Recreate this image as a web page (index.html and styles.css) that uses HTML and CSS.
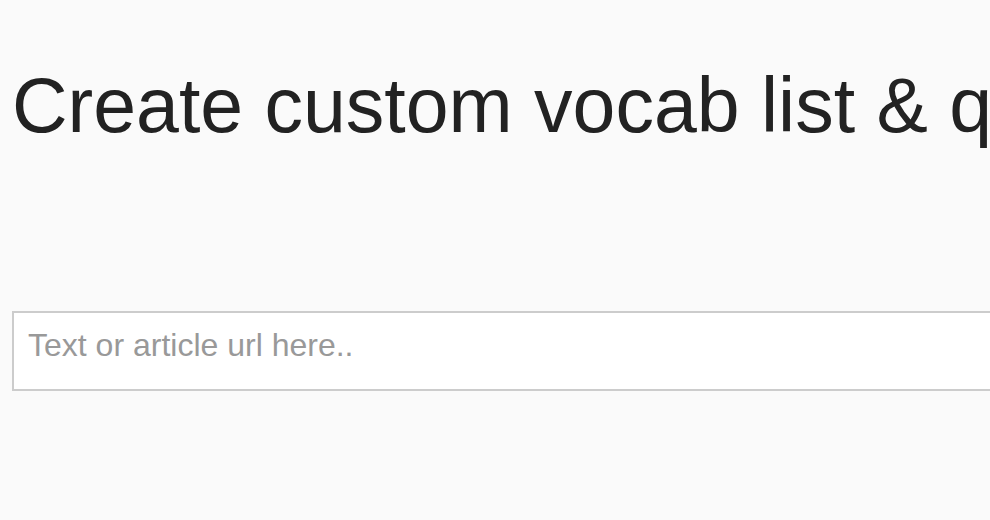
FILE: index.html
```html
<!DOCTYPE html>
<html lang="en">
<head>
<meta charset="utf-8">
<title>Create custom vocab list</title>
<link rel="stylesheet" href="styles.css">
</head>
<body>
<main class="page">
  <h1 class="title">Create custom vocab list &amp; quiz</h1>
  <form class="entry">
    <textarea class="entry-field" rows="1" placeholder="Text or article url here.."></textarea>
  </form>
</main>
</body>
</html>
```
FILE: styles.css
```css
html, body {
  margin: 0;
  padding: 0;
  background: #fafafa;
  overflow: hidden;
}
body {
  font-family: "Liberation Sans", Arial, Helvetica, sans-serif;
  color: #222222;
}
.page {
  padding: 67px 0 0 12px;
  width: 1400px;
}
.title {
  margin: 0;
  font-size: 77px;
  line-height: 1;
  font-weight: normal;
  white-space: nowrap;
  color: #222222;
}
.entry {
  margin: 167px 0 0 0;
}
.entry-field {
  display: block;
  box-sizing: border-box;
  width: 1300px;
  height: 80px;
  padding: 14px;
  margin: 0;
  border: 2px solid #cccccc;
  border-radius: 0;
  background: #ffffff;
  font-family: "Liberation Sans", Arial, Helvetica, sans-serif;
  font-size: 32px;
  line-height: normal;
  color: #222222;
  resize: none;
  outline: none;
  overflow: hidden;
}
.entry-field::placeholder {
  color: #999999;
  opacity: 1;
}
```
